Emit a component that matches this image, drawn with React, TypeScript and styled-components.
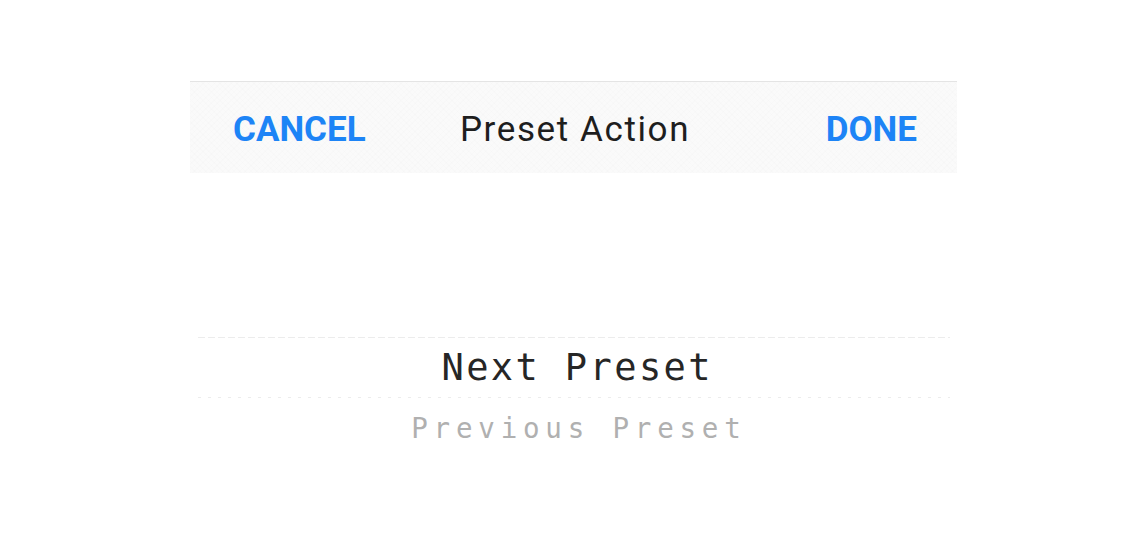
import React from "react";
import styled, { createGlobalStyle } from "styled-components";

const Global = createGlobalStyle`
  html, body { margin: 0; padding: 0; background: #ffffff; }
  body { font-family: Roboto, "Noto Sans", sans-serif; }
`;

const Page = styled.div`
  width: 1147px;
  height: 544px;
  display: flex;
  flex-direction: column;
  align-items: flex-start;
  padding-top: 81px;
  box-sizing: border-box;
`;

const Header = styled.header`
  margin-left: 190px;
  width: 767px;
  height: 92px;
  box-sizing: border-box;
  border-top: 1px solid #e4e4e4;
  background-color: #fafafa;
  background-image:
    repeating-linear-gradient(45deg, rgba(0,0,0,0.008) 0 1px, transparent 1px 4px),
    repeating-linear-gradient(-45deg, rgba(0,0,0,0.008) 0 1px, transparent 1px 4px);
  display: grid;
  grid-template-columns: 1fr auto 1fr;
  align-items: center;
  padding: 3px 40px 0 43px;
`;

const ActionButton = styled.button<{ $align: "start" | "end" }>`
  justify-self: ${(p) => p.$align};
  border: none;
  background: none;
  padding: 0;
  font-family: Roboto, sans-serif;
  font-weight: 700;
  font-size: 35px;
  color: #1d84f6;
  cursor: pointer;
`;

const Title = styled.h1`
  margin: 0;
  font-family: Roboto, sans-serif;
  font-weight: 400;
  font-size: 35px;
  letter-spacing: 1.6px;
  color: #1e1e1e;
`;

const Picker = styled.div`
  margin-top: 164px;
  margin-left: 198px;
  width: 752px;
  display: flex;
  flex-direction: column;
`;

const Divider = styled.div<{ $dash: number; $gap: number }>`
  height: 1px;
  background-image: repeating-linear-gradient(
    90deg,
    #ececec 0 ${(p) => p.$dash}px,
    transparent ${(p) => p.$dash}px ${(p) => p.$dash + p.$gap}px
  );
`;

const Option = styled.div<{ $selected?: boolean }>`
  height: ${(p) => (p.$selected ? 59 : 60)}px;
  display: flex;
  align-items: center;
  justify-content: center;
  font-family: "DejaVu Sans Mono", "Liberation Mono", monospace;
  font-size: ${(p) => (p.$selected ? 37 : 27.5)}px;
  letter-spacing: ${(p) => (p.$selected ? 2.4 : 5.8)}px;
  padding-left: ${(p) => (p.$selected ? 2.4 : 5.8)}px;
  color: ${(p) => (p.$selected ? "#262626" : "#b0b0b0")};
  position: relative;
  left: 2px;
`;

export default function App() {
  return (
    <>
      <Global />
      <Page>
        <Header>
          <ActionButton $align="start">CANCEL</ActionButton>
          <Title>Preset Action</Title>
          <ActionButton $align="end">DONE</ActionButton>
        </Header>
        <Picker>
          <Divider $dash={7} $gap={3} />
          <Option $selected>Next Preset</Option>
          <Divider $dash={3} $gap={7} />
          <Option>Previous Preset</Option>
        </Picker>
      </Page>
    </>
  );
}
